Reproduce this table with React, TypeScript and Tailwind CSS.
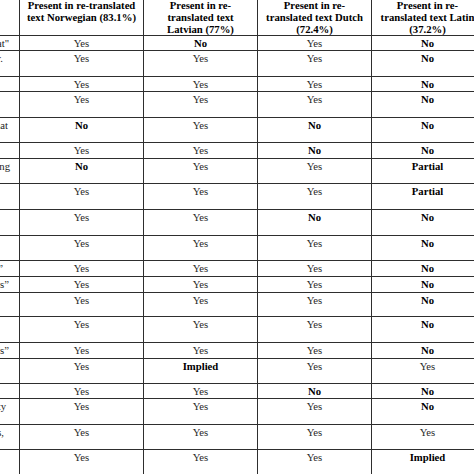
import React from 'react';

type Val = 'Yes' | 'No' | 'Partial' | 'Implied';

interface Row {
  h: string;
  lead: string;
  leadPad: string;
  vals: Val[];
}

const rows: Row[] = [
  { h: 'h-[15px]', lead: 'that"', leadPad: 'pr-[10px]', vals: ['Yes', 'No', 'Yes', 'No'] },
  { h: 'h-[26px]', lead: 'other.', leadPad: 'pr-[16px]', vals: ['Yes', 'Yes', 'Yes', 'No'] },
  { h: 'h-[15px]', lead: '', leadPad: '', vals: ['Yes', 'Yes', 'Yes', 'No'] },
  { h: 'h-[26px]', lead: '', leadPad: '', vals: ['Yes', 'Yes', 'Yes', 'No'] },
  { h: 'h-[25px]', lead: 'that', leadPad: 'pr-[11px]', vals: ['No', 'Yes', 'No', 'No'] },
  { h: 'h-[16px]', lead: '', leadPad: '', vals: ['Yes', 'Yes', 'No', 'No'] },
  { h: 'h-[25px]', lead: 'thing', leadPad: 'pr-[9px]', vals: ['No', 'Yes', 'Yes', 'Partial'] },
  { h: 'h-[26px]', lead: '', leadPad: '', vals: ['Yes', 'Yes', 'Yes', 'Partial'] },
  { h: 'h-[26px]', lead: '', leadPad: '', vals: ['Yes', 'Yes', 'No', 'No'] },
  { h: 'h-[25px]', lead: '', leadPad: '', vals: ['Yes', 'Yes', 'Yes', 'No'] },
  { h: 'h-[16px]', lead: 'it\u201D', leadPad: 'pr-[16px]', vals: ['Yes', 'Yes', 'Yes', 'No'] },
  { h: 'h-[16px]', lead: 'yes\u201D', leadPad: 'pr-[10px]', vals: ['Yes', 'Yes', 'Yes', 'No'] },
  { h: 'h-[24px]', lead: '', leadPad: '', vals: ['Yes', 'Yes', 'Yes', 'No'] },
  { h: 'h-[26px]', lead: '', leadPad: '', vals: ['Yes', 'Yes', 'Yes', 'No'] },
  { h: 'h-[16px]', lead: 'one\u2019s\u201D', leadPad: 'pr-[10px]', vals: ['Yes', 'Yes', 'Yes', 'No'] },
  { h: 'h-[25px]', lead: '', leadPad: '', vals: ['Yes', 'Implied', 'Yes', 'Yes'] },
  { h: 'h-[15px]', lead: '', leadPad: '', vals: ['Yes', 'Yes', 'No', 'No'] },
  { h: 'h-[26px]', lead: 'city', leadPad: 'pr-[13px]', vals: ['Yes', 'Yes', 'Yes', 'No'] },
  { h: 'h-[25px]', lead: 'sides,', leadPad: 'pr-[15px]', vals: ['Yes', 'Yes', 'Yes', 'Yes'] },
  { h: 'h-[30px]', lead: '', leadPad: '', vals: ['Yes', 'Yes', 'Yes', 'Implied'] },
];

const headers: string[][] = [
  ['Present in re-translated', 'text Norwegian (83.1%)'],
  ['Present in re-', 'translated text', 'Latvian (77%)'],
  ['Present in re-', 'translated text Dutch', '(72.4%)'],
  ['Present in re-', 'translated text Latin', '(37.2%)'],
];

const grid = 'grid grid-cols-[19px_124px_114px_114px_112px]';

const App: React.FC = () => {
  return (
    <div className="w-[474px] h-[474px] overflow-hidden bg-white font-[family-name:'Liberation_Serif','Times_New_Roman',serif] text-[10.7px]">
      <div className="w-[483px]">
        <div className={`${grid} h-[36px] border-b border-[#2e2e2e]`}>
          <div />
          {headers.map((lines, i) => (
            <div key={i} className="border-l border-[#2e2e2e] text-center font-bold text-black leading-[12px] whitespace-nowrap overflow-hidden">
              <div className="-mt-px">
                {lines.map((l, j) => (
                  <div key={j}>{l}</div>
                ))}
              </div>
            </div>
          ))}
        </div>

        {rows.map((r, i) => (
          <div key={i} className={`${grid} ${r.h} border-b border-[#2e2e2e] leading-[15px]`}>
            <div className={`flex justify-end overflow-hidden whitespace-nowrap text-[#222] ${r.leadPad}`}>
              {r.lead}
            </div>
            {r.vals.map((v, j) => (
              <div
                key={j}
                className={
                  v === 'Yes'
                    ? 'border-l border-[#2e2e2e] text-center text-[#2a2a2a]'
                    : 'border-l border-[#2e2e2e] text-center font-bold text-black'
                }
              >
                {v}
              </div>
            ))}
          </div>
        ))}
      </div>
    </div>
  );
};

export default App;
